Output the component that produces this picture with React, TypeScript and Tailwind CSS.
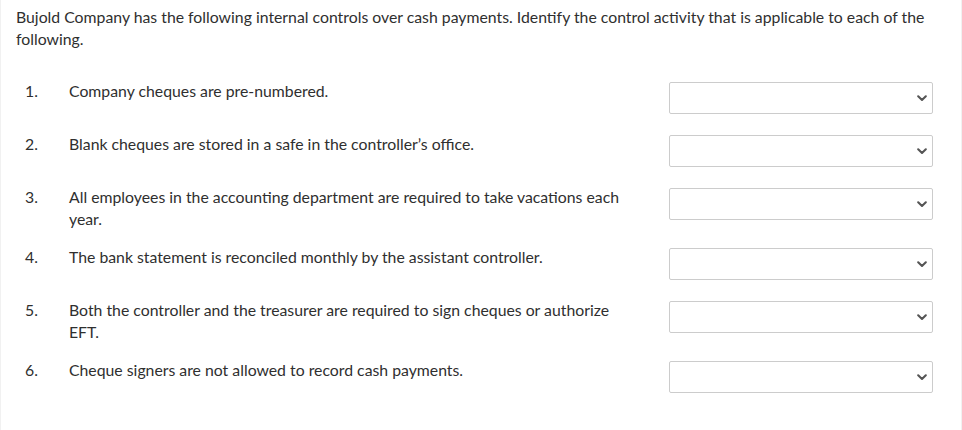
const items: string[] = [
  'Company cheques are pre-numbered.',
  'Blank cheques are stored in a safe in the controller\u2019s office.',
  'All employees in the accounting department are required to take vacations each year.',
  'The bank statement is reconciled monthly by the assistant controller.',
  'Both the controller and the treasurer are required to sign cheques or authorize EFT.',
  'Cheque signers are not allowed to record cash payments.',
]

function Chevron() {
  return (
    <svg width="10" height="7" viewBox="0 0 10 7" fill="none">
      <polyline points="1.2,1.3 5,5 8.8,1.3" stroke="#555" strokeWidth="2.1" strokeLinecap="round" strokeLinejoin="round" />
    </svg>
  )
}

export default function App() {
  return (
    <div
      className="w-[962px] h-[430px] bg-white border-x border-[#f1f1f1] px-[15px] pt-[6px] text-[#2f2f2f] overflow-hidden"
      style={{ fontFamily: 'Lato, "Open Sans", sans-serif' }}
    >
      <p className="text-[15.8px] leading-[22px]">
        Bujold Company has the following internal controls over cash payments. Identify the control activity that is applicable to each of the following.
      </p>

      <div className="mt-[22px] flex flex-col">
        {items.map((text, i) => (
          <div key={i} className="flex items-start py-[8px] pl-[9px]">
            <span className="w-[44px] shrink-0 text-[15.8px] leading-[22px]">{i + 1}.</span>
            <span className="w-[570px] shrink-0 text-[15.8px] leading-[22px]">{text}</span>
            <div className="ml-[30px] h-[37px] pt-[2px]">
              <div className="w-[264px] h-[32px] border border-[#cccccc] rounded-[2px] bg-white flex items-center justify-end pr-[5px]">
                <Chevron />
              </div>
            </div>
          </div>
        ))}
      </div>
    </div>
  )
}
